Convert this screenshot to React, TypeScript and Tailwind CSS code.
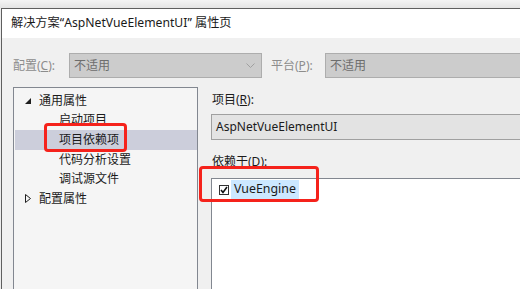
const font = { fontFamily: '"Noto Sans", "Noto Sans CJK SC", sans-serif' };

const treeRows = [
  { label: "通用属性", level: 0, arrow: "open" },
  { label: "启动项目", level: 1 },
  { label: "项目依赖项", level: 1, selected: true },
  { label: "代码分析设置", level: 1 },
  { label: "调试源文件", level: 1 },
  { label: "配置属性", level: 0, arrow: "closed" },
];

function Arrow({ kind }: { kind?: string }) {
  if (kind === "open") {
    return (
      <svg width="6" height="6" viewBox="0 0 6 6" className="mt-[1px]">
        <polygon points="6,0 6,6 0,6" fill="#1e1e1e" />
      </svg>
    );
  }
  if (kind === "closed") {
    return (
      <svg width="6" height="9" viewBox="0 0 6 9">
        <polygon points="0.5,0.5 5.5,4.5 0.5,8.5" fill="none" stroke="#1e1e1e" strokeWidth="1" />
      </svg>
    );
  }
  return null;
}

export default function App() {
  return (
    <div
      className="relative w-[520px] h-[289px] overflow-hidden bg-[#ececec] text-[12px] leading-none"
      style={font}
    >
      <div className="h-[8px] bg-gradient-to-b from-[#f4f4f4] to-[#e4e4e4]" />
      <div className="ml-[1px] h-[281px] border-l border-t border-[#5f5f5f] bg-[#f0f0f0]">
        <div className="h-[29px] bg-white flex items-center pl-[9px] text-[#1a1a1a] text-[12.2px]">
          解决方案“AspNetVueElementUI” 属性页
        </div>

        <div className="flex items-center pt-[15px] h-[40px]">
          <span className="ml-[11px] w-[56px] text-[#8c8c8c]">
            配置(<span className="underline">C</span>):
          </span>
          <div className="w-[193px] h-[25px] bg-[#cccccc] border border-[#adadad] flex items-center pl-[4px] text-[#6d6d6d]">
            <span className="flex-1">不适用</span>
            <svg width="9" height="5" viewBox="0 0 9 5" className="mr-[6px]">
              <polyline points="0.5,0.5 4.5,4.5 8.5,0.5" fill="none" stroke="#a0a0a0" strokeWidth="1" />
            </svg>
          </div>
          <span className="ml-[9px] w-[54px] text-[#8c8c8c]">
            平台(<span className="underline">P</span>):
          </span>
          <div className="flex-1 h-[25px] bg-[#cccccc] border border-[#adadad] border-r-0 flex items-center pl-[4px] text-[#6d6d6d]">
            不适用
          </div>
        </div>

        <div className="flex pt-[9px]">
          <div className="ml-[11px] w-[185px] h-[210px] bg-[#f5f5f5] border border-[#828790] pt-[3px] shrink-0">
            {treeRows.map((r) => (
              <div
                key={r.label}
                className={`h-[19.6px] flex items-center ml-[1px] text-[#1b1b1b] ${r.selected ? "bg-[#cccedb]" : ""}`}
              >
                <span className="w-[10px] ml-[10px] flex items-center">
                  <Arrow kind={r.arrow} />
                </span>
                <span className={r.level === 1 ? "ml-[24px]" : "ml-[4px]"}>{r.label}</span>
              </div>
            ))}
          </div>

          <div className="ml-[13px] flex-1 flex flex-col text-[#1b1b1b]">
            <div className="h-[20px] flex items-center pl-[1px] pt-[6px]">
              项目(<span className="underline">R</span>):
            </div>
            <div className="mt-[7px] h-[26px] bg-[#e3e3e3] border border-[#a0a0a0] border-r-0 flex items-center pl-[4px]">
              AspNetVueElementUI
            </div>
            <div className="h-[20px] mt-[12px] flex items-center pl-[1px]">
              依赖于(<span className="underline">D</span>):
            </div>
            <div className="mt-[6px] flex-1 bg-white border border-[#828790] border-r-0 h-[120px]">
              <div className="flex items-center mt-[1px] ml-[7px]">
                <div className="w-[10px] h-[10px] border border-[#333] bg-white flex items-center justify-center">
                  <svg width="8" height="8" viewBox="0 0 8 8">
                    <polyline points="1,4 3,6.5 7,1" fill="none" stroke="#111" strokeWidth="1.6" />
                  </svg>
                </div>
                <span className="ml-[2px] h-[19px] px-[3px] bg-[#cce8ff] flex items-center text-[12.4px]">VueEngine</span>
              </div>
            </div>
          </div>
        </div>
      </div>

      <div className="absolute left-[44px] top-[123px] w-[83px] h-[29px] border-[3px] border-[#f5221b] rounded-[4px]" />
      <div className="absolute left-[199px] top-[166px] w-[120px] h-[36px] border-[3px] border-[#f5221b] rounded-[4px]" />
    </div>
  );
}
